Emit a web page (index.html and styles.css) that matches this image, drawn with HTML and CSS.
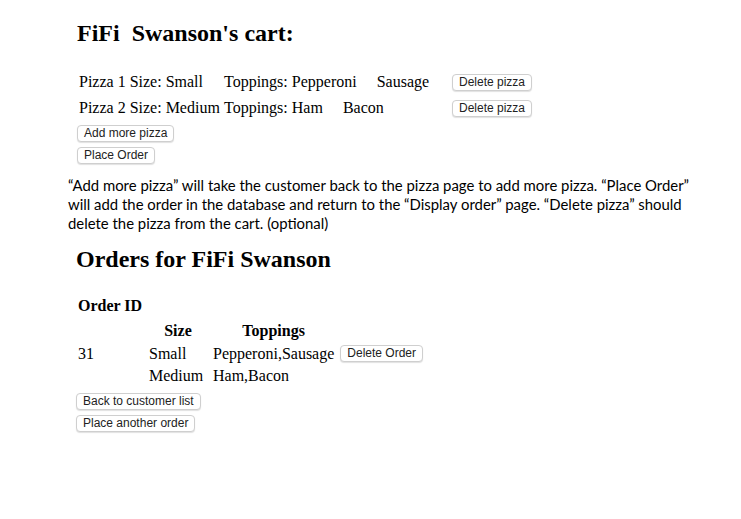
FILE: index.html
```html
<!DOCTYPE html>
<html lang="en">
<head>
    <meta charset="UTF-8">
    <title>Cart and Orders</title>
    <link rel="stylesheet" href="styles.css">
</head>
<body>
    <!-- Cart -->
    <div class="cart">
        <h1>FiFi&nbsp; Swanson's cart:</h1>
        <div class="pizza-list">
            <div class="pizza-row">
                <span class="size">Pizza 1 Size: Small</span>
                <span class="toppings"><span>Toppings: Pepperoni</span><span>Sausage</span></span>
                <button>Delete pizza</button>
            </div>
            <div class="pizza-row">
                <span class="size">Pizza 2 Size: Medium</span>
                <span class="toppings"><span>Toppings: Ham</span><span>Bacon</span></span>
                <button>Delete pizza</button>
            </div>
        </div>
        <div class="actions">
            <button>Add more pizza</button>
            <button>Place Order</button>
        </div>
    </div>

    <p class="note">“Add more pizza” will take the customer back to the pizza page to add more pizza. “Place Order” will add the order in the database and return to the “Display order” page. “Delete pizza” should delete the pizza from the cart. (optional)</p>

    <!-- Orders -->
    <div class="orders">
        <h2>Orders for FiFi Swanson</h2>
        <div class="order-id">Order ID</div>
        <table class="order-table">
            <tr>
                <th class="col-id"></th>
                <th class="col-size">Size</th>
                <th>Toppings</th>
                <th></th>
            </tr>
            <tr>
                <td>31</td>
                <td>Small</td>
                <td>Pepperoni,Sausage</td>
                <td class="col-action"><button>Delete Order</button></td>
            </tr>
            <tr>
                <td></td>
                <td>Medium</td>
                <td>Ham,Bacon</td>
                <td></td>
            </tr>
        </table>
        <div class="actions">
            <button>Back to customer list</button>
            <button>Place another order</button>
        </div>
    </div>
</body>
</html>
```

FILE: styles.css
```css
* {
    margin: 0;
    padding: 0;
    box-sizing: border-box;
}

body {
    font-family: "Liberation Serif", "Times New Roman", serif;
    font-size: 16px;
    color: #000;
    background-color: #fff;
    width: 741px;
    height: 519px;
}

/* Buttons */
button {
    display: block;
    font-family: "Liberation Sans", Arial, sans-serif;
    font-size: 12px;
    line-height: 15px;
    padding: 0 6px;
    color: #222;
    background-color: #fff;
    border: 1px solid #cfcfcf;
    border-radius: 4px;
    box-shadow: 0 1px 1px rgba(0, 0, 0, 0.12);
}

/* Cart section */
.cart {
    padding: 18px 0 0 77px;
}

.cart h1 {
    font-size: 24px;
    line-height: 30px;
    margin-bottom: 21px;
}

.pizza-list {
    padding-left: 2px;
}

.pizza-row {
    display: grid;
    grid-template-columns: 145px 228px auto;
    align-items: center;
    height: 26px;
}

.pizza-row button {
    justify-self: start;
}

.toppings {
    display: flex;
    gap: 20px;
}

.actions {
    display: flex;
    flex-direction: column;
    align-items: flex-start;
    gap: 5px;
    margin-top: 4px;
}

/* Note paragraph */
.note {
    font-family: Lato, "Open Sans", sans-serif;
    font-size: 14.9px;
    line-height: 19px;
    width: 710px;
    padding: 12px 0 0 68px;
}

/* Orders section */
.orders {
    padding: 11px 0 0 76px;
}

.orders h2 {
    font-size: 24px;
    line-height: 30px;
    margin-bottom: 23px;
}

.order-id {
    font-weight: bold;
    padding-left: 2px;
    margin-bottom: 5px;
}

.order-table {
    border-spacing: 0;
    margin-left: 2px;
}

.order-table th,
.order-table td {
    padding: 0 6px 0 0;
    line-height: 22.5px;
    text-align: left;
    vertical-align: middle;
}

.order-table th {
    text-align: center;
}

.col-id {
    width: 71px;
}

.col-size {
    width: 64px;
}

.col-action {
    padding-left: 6px;
}

.orders .actions {
    margin-top: 5px;
}
```
